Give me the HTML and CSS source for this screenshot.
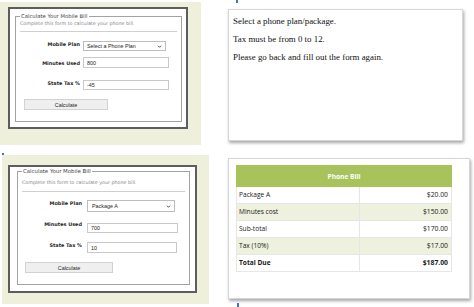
FILE: index.html
```html
<!DOCTYPE html>
<html lang="en">
<head>
<meta charset="utf-8">
<title>Mobile Bill</title>
<link rel="stylesheet" href="styles.css">
</head>
<body>
<div class="page">
  <section class="cell cell-form-a">
    <div class="panel panel-a">
      <div class="frame frame-a">
        <fieldset class="calc calc-a">
          <legend>Calculate Your Mobile Bill</legend>
          <p class="desc">Complete this form to calculate your phone bill.</p>
          <hr class="rule">
          <div class="row row-plan"><label>Mobile Plan</label><select class="ctl sel"><option>Select a Phone Plan</option></select></div>
          <div class="row row-min"><label>Minutes Used</label><input class="ctl inp" value="800"></div>
          <div class="row row-tax"><label>State Tax %</label><input class="ctl inp" value="-45"></div>
          <button class="btn" type="button">Calculate</button>
        </fieldset>
      </div>
    </div>
  </section>

  <section class="cell cell-msg">
    <div class="mark mark-top"></div>
    <div class="card card-msg">
      <p>Select a phone plan/package.</p>
      <p>Tax must be from 0 to 12.</p>
      <p>Please go back and fill out the form again.</p>
    </div>
  </section>

  <section class="cell cell-form-b">
    <div class="mark mark-left"></div>
    <div class="panel panel-b">
      <div class="frame frame-b">
        <fieldset class="calc calc-b">
          <legend>Calculate Your Mobile Bill</legend>
          <p class="desc">Complete this form to calculate your phone bill.</p>
          <hr class="rule">
          <div class="row row-plan"><label>Mobile Plan</label><select class="ctl sel"><option>Package A</option></select></div>
          <div class="row row-min"><label>Minutes Used</label><input class="ctl inp" value="700"></div>
          <div class="row row-tax"><label>State Tax %</label><input class="ctl inp" value="10"></div>
          <button class="btn" type="button">Calculate</button>
        </fieldset>
      </div>
    </div>
  </section>

  <section class="cell cell-bill">
    <div class="card card-bill">
      <table class="bill">
        <thead><tr><th colspan="2">Phone Bill</th></tr></thead>
        <tbody>
          <tr><td>Package A</td><td class="amt">$20.00</td></tr>
          <tr class="alt"><td>Minutes cost</td><td class="amt">$150.00</td></tr>
          <tr><td>Sub-total</td><td class="amt">$170.00</td></tr>
          <tr class="alt"><td>Tax (10%)</td><td class="amt">$17.00</td></tr>
          <tr class="total"><td>Total Due</td><td class="amt">$187.00</td></tr>
        </tbody>
      </table>
    </div>
    <div class="mark mark-bottom"></div>
  </section>
</div>
</body>
</html>
```

FILE: styles.css
```css
* { box-sizing: border-box; }

html, body {
  margin: 0;
  padding: 0;
  background: #ffffff;
}

body {
  width: 474px;
  height: 307px;
  overflow: hidden;
  font-family: "DejaVu Sans", Verdana, sans-serif;
}

.page {
  display: grid;
  grid-template-columns: 228px 246px;
  grid-template-rows: 150px 157px;
}

.cell {
  display: flex;
  flex-direction: column;
  align-items: flex-start;
}

/* small blue artefacts of the screenshot collage */
.mark {
  width: 2px;
  background: #3f73c8;
}
.mark-top { height: 3px; margin-left: 8px; }
.mark-left { height: 2px; margin-top: 3px; margin-left: 2px; }
.mark-bottom { height: 4px; margin-top: 4px; margin-left: 9px; }

/* ---------- form panels ---------- */
.panel {
  background: #eff0dc;
}
.panel-a {
  margin-top: 2px;
  width: 201px;
  height: 143px;
  padding: 5px 0 0 8px;
}
.panel-b {
  margin-left: 2px;
  width: 207px;
  height: 149px;
  padding: 10px 0 0 6px;
}

.frame {
  background: #ffffff;
  border: 2px solid #5d5d5d;
  display: flex;
  flex-direction: column;
}
.frame-a {
  width: 180px;
  height: 122px;
  padding: 4px 4px 5px 5px;
}
.frame-b {
  width: 189px;
  height: 128px;
  padding: 1px 5px 6px 7px;
}

.calc {
  flex: 1;
  margin: 0;
  min-width: 0;
  border: 1px solid #a3a3a3;
  padding: 0 4px;
  display: flex;
  flex-direction: column;
  align-items: flex-start;
}

.calc legend {
  padding: 0 1px;
  line-height: 6px;
  color: #444444;
  white-space: nowrap;
}
.calc-a legend { font-size: 5.3px; }
.calc-b legend { font-size: 5.4px; }

.desc {
  margin: 0;
  font-size: 4.8px;
  line-height: 6px;
  color: #858585;
  white-space: nowrap;
}
.calc-a .desc { margin-top: 2px; }
.calc-b .desc { margin-top: 6px; }

.rule {
  align-self: stretch;
  margin: 0;
  height: 0;
  border: 0;
  border-top: 1px solid #cfcfcf;
}
.calc-a .rule { margin-top: 4px; }
.calc-b .rule { margin-top: 5px; }

.row {
  display: flex;
  align-items: flex-start;
}
.row label {
  width: 60px;
  text-align: right;
  font-weight: bold;
  font-size: 4.95px;
  line-height: 6px;
  color: #262626;
  white-space: nowrap;
}

.ctl {
  margin: 0;
  font-family: "Liberation Sans", Arial, sans-serif;
  font-size: 5.4px;
  color: #1e1e1e;
  background: #ffffff;
  border: 1px solid #c9c9c9;
  border-radius: 0;
  padding: 0 0 0 3px;
  outline: none;
}

.sel {
  appearance: none;
  -webkit-appearance: none;
  background-image: url("data:image/svg+xml,%3Csvg xmlns='http://www.w3.org/2000/svg' viewBox='0 0 10 10'%3E%3Cpath d='M2 3.5 L5 6.5 L8 3.5' fill='none' stroke='%23333' stroke-width='1.8'/%3E%3C/svg%3E");
  background-repeat: no-repeat;
  background-size: 5px 5px;
  background-position: right 3px center;
  border-color: #bdbdbd;
}

.calc-a .row label { margin-right: 3px; }
.calc-b .row label { margin-right: 5px; }

.calc-a .row-plan { margin-top: 9px; }
.calc-a .row-plan .sel { width: 83px; height: 10px; }
.calc-a .row-min { margin-top: 6px; }
.calc-a .row-min label { padding-top: 3px; }
.calc-a .row-min .inp { width: 86px; height: 11px; }
.calc-a .row-tax { margin-top: 12px; }
.calc-a .row-tax .inp { width: 86px; height: 10px; }

.calc-b .row-plan { margin-top: 8px; }
.calc-b .row-plan .sel { width: 88px; height: 12px; padding-left: 4px; }
.calc-b .row-min { margin-top: 11px; }
.calc-b .row-min label { margin-top: -2px; }
.calc-b .row-min .inp { width: 91px; height: 10px; }
.calc-b .row-tax { margin-top: 9px; }
.calc-b .row-tax .inp { width: 90px; height: 11px; }

.btn {
  margin: 0;
  padding: 0;
  font-family: "Liberation Sans", Arial, sans-serif;
  font-size: 5.4px;
  color: #1e1e1e;
  background: #efefef;
  border: 1px solid #d2d2d2;
  border-radius: 0;
}
.calc-a .btn { margin-top: 9px; margin-left: 4px; width: 84px; height: 11px; }
.calc-b .btn { margin-top: 9px; margin-left: 3px; width: 88px; height: 11px; }

/* ---------- right cards ---------- */
.card {
  background: #ffffff;
  border: 1px solid #d6d6d6;
  box-shadow: 1px 2px 3px rgba(0, 0, 0, 0.35);
}

.card-msg {
  margin-top: 6px;
  width: 235px;
  height: 132px;
  padding: 6px 0 0 4px;
  font-family: "Liberation Serif", "Times New Roman", serif;
  font-size: 8.9px;
  color: #111111;
}
.card-msg p {
  margin: 0 0 8px 0;
  line-height: 10px;
}

.card-bill {
  margin-top: 8px;
  width: 242px;
  height: 141px;
  padding: 6px 0 0 7px;
}

.bill {
  width: 216px;
  border-collapse: collapse;
  font-family: "Open Sans", "Trebuchet MS", sans-serif;
  font-size: 6.6px;
  color: #1a1a1a;
}
.bill th {
  height: 21px;
  padding: 0;
  background: #a8c35c;
  color: #ffffff;
  font-weight: bold;
  font-size: 6.6px;
  text-align: center;
  border: 1px solid #a8c35c;
}
.bill td {
  height: 17px;
  padding: 0 3px 0 2px;
  border: 1px solid #e6e6e6;
  line-height: 8px;
}
.bill td:first-child { width: 123px; }
.bill .amt { text-align: right; font-size: 6.8px; }
.bill .alt td { background: #edf1de; }
.bill .total td { font-weight: bold; }
```
